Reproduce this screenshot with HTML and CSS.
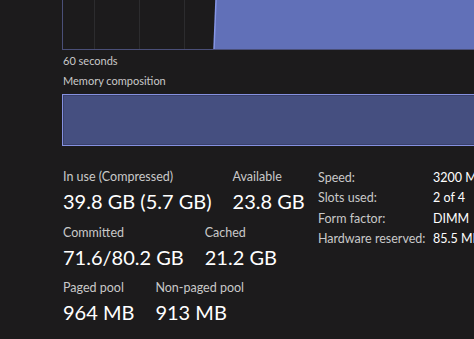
FILE: index.html
```html
<!DOCTYPE html>
<html lang="en">
<head>
  <meta charset="UTF-8" />
  <title>Memory</title>
  <link rel="stylesheet" href="styles.css">
</head>
<body>
  <div class="panel">
    <div class="chart">
      <svg width="560" height="49" viewBox="0 0 560 49">
        <line x1="31.5" y1="0" x2="31.5" y2="49" class="grid" />
        <line x1="76.5" y1="0" x2="76.5" y2="49" class="grid" />
        <line x1="121.5" y1="0" x2="121.5" y2="49" class="grid" />
        <polygon points="153,0 560,0 560,49 151,49" class="area" />
        <line x1="153" y1="0" x2="151" y2="49" class="edge" />
      </svg>
    </div>
    <div class="caption">60 seconds</div>
    <div class="caption comp">Memory composition</div>
    <div class="bar"></div>

    <div class="details">
      <div class="stats">
        <div class="row">
          <div class="stat">
            <div class="label">In use (Compressed)</div>
            <div class="value">39.8 GB (5.7 GB)</div>
          </div>
          <div class="stat">
            <div class="label">Available</div>
            <div class="value">23.8 GB</div>
          </div>
        </div>
        <div class="row">
          <div class="stat">
            <div class="label">Committed</div>
            <div class="value">71.6/80.2 GB</div>
          </div>
          <div class="stat">
            <div class="label">Cached</div>
            <div class="value">21.2 GB</div>
          </div>
        </div>
        <div class="row">
          <div class="stat">
            <div class="label">Paged pool</div>
            <div class="value">964 MB</div>
          </div>
          <div class="stat">
            <div class="label">Non-paged pool</div>
            <div class="value">913 MB</div>
          </div>
        </div>
      </div>

      <div class="specs">
        <div class="spec"><span class="key">Speed:</span><span class="val">3200 MHz</span></div>
        <div class="spec"><span class="key">Slots used:</span><span class="val">2 of 4</span></div>
        <div class="spec"><span class="key">Form factor:</span><span class="val">DIMM</span></div>
        <div class="spec"><span class="key">Hardware reserved:</span><span class="val">85.5 MB</span></div>
      </div>
    </div>
  </div>
</body>
</html>
```

FILE: styles.css
```css
body {
  margin: 0;
  background: #1c1b1c;
  color: #fff;
  font-family: 'Lato', 'Noto Sans', sans-serif;
  overflow: hidden;
  width: 474px;
  height: 339px;
}
.panel {
  margin-left: 62px;
  width: 560px;
}
.chart {
  height: 49px;
  border-left: 1px solid #4a4f78;
  border-bottom: 1px solid #4a4f78;
}
.chart svg {
  display: block;
}
.grid {
  stroke: #2c2c2e;
  stroke-width: 1;
}
.area {
  fill: #6170b8;
}
.edge {
  stroke: #8595e6;
  stroke-width: 1.5;
}
.caption {
  font-size: 11px;
  color: #c9c9c9;
  line-height: 16px;
  margin-top: 3px;
  padding-left: 1px;
}
.caption.comp {
  margin-top: 4px;
}
.bar {
  margin-top: 5px;
  height: 50px;
  background: #454f80;
  border: 1px solid #8591e0;
  box-shadow: inset 0 0 0 1px #39406a;
}
.details {
  display: flex;
  margin-top: 22px;
}
.stats {
  width: 256px;
  display: flex;
  flex-direction: column;
  gap: 7.5px;
}
.row {
  display: flex;
  gap: 20px;
}
.stat {
  padding-left: 1px;
}
.label {
  font-size: 12.5px;
  color: #c9c9c9;
  line-height: 18px;
}
.value {
  font-size: 20px;
  line-height: 30px;
  color: #fff;
}
.specs {
  display: flex;
  flex-direction: column;
  margin-top: 0;
}
.spec {
  display: flex;
  font-size: 12.5px;
  line-height: 20.3px;
  white-space: nowrap;
}
.key {
  width: 115px;
  color: #c9c9c9;
}
.val {
  color: #fff;
}
```
